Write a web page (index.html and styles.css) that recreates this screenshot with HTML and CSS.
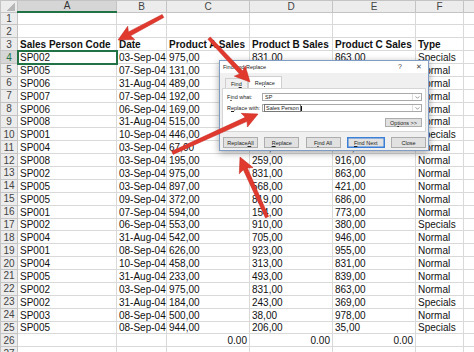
FILE: index.html
```html
<!DOCTYPE html>
<html lang="en">
<head>
    <meta charset="UTF-8">
    <title>Sales - Find and Replace</title>
    <link rel="stylesheet" href="styles.css">
</head>
<body>
    <div class="sheet">
        <table class="grid">
            <colgroup>
                <col class="c-rh"><col class="c-a"><col class="c-b"><col class="c-c"><col class="c-d"><col class="c-e"><col class="c-f"><col class="c-g">
            </colgroup>
            <tr class="hdr">
                <th class="corner"></th><th class="sel-col">A</th><th>B</th><th>C</th><th>D</th><th>E</th><th>F</th><th></th>
            </tr>
            <tr><th>1</th><td></td><td></td><td></td><td></td><td></td><td></td><td></td></tr>
            <tr><th>2</th><td></td><td></td><td></td><td></td><td></td><td></td><td></td></tr>
            <tr class="bold"><th>3</th><td>Sales Person Code</td><td>Date</td><td>Product A Sales</td><td>Product B Sales</td><td>Product C Sales</td><td>Type</td><td></td></tr>
            <tr><th class="sel-row">4</th><td class="active">SP002</td><td class="r">03-Sep-04</td><td>975,00</td><td>831.00</td><td>863.00</td><td>Specials</td><td></td></tr>
            <tr><th>5</th><td>SP005</td><td class="r">07-Sep-04</td><td>131,00</td><td>512,00</td><td>640,00</td><td>Normal</td><td></td></tr>
            <tr><th>6</th><td>SP006</td><td class="r">31-Aug-04</td><td>489,00</td><td>277,00</td><td>718,00</td><td>Normal</td><td></td></tr>
            <tr><th>7</th><td>SP007</td><td class="r">07-Sep-04</td><td>192,00</td><td>604,00</td><td>355,00</td><td>Normal</td><td></td></tr>
            <tr><th>8</th><td>SP006</td><td class="r">06-Sep-04</td><td>169,00</td><td>448,00</td><td>902,00</td><td>Normal</td><td></td></tr>
            <tr><th>9</th><td>SP008</td><td class="r">31-Aug-04</td><td>515,00</td><td>736,00</td><td>291,00</td><td>Normal</td><td></td></tr>
            <tr><th>10</th><td>SP001</td><td class="r">10-Sep-04</td><td>446,00</td><td>183,00</td><td>564,00</td><td>Specials</td><td></td></tr>
            <tr><th>11</th><td>SP004</td><td class="r">03-Sep-04</td><td>67,00</td><td>820,00</td><td>417,00</td><td>Normal</td><td></td></tr>
            <tr><th>12</th><td>SP008</td><td class="r">03-Sep-04</td><td>195,00</td><td>259,00</td><td>916,00</td><td>Normal</td><td></td></tr>
            <tr><th>13</th><td>SP002</td><td class="r">03-Sep-04</td><td>975,00</td><td>831,00</td><td>863,00</td><td>Normal</td><td></td></tr>
            <tr><th>14</th><td>SP005</td><td class="r">03-Sep-04</td><td>897,00</td><td>568,00</td><td>421,00</td><td>Normal</td><td></td></tr>
            <tr><th>15</th><td>SP005</td><td class="r">09-Sep-04</td><td>372,00</td><td>819,00</td><td>686,00</td><td>Normal</td><td></td></tr>
            <tr><th>16</th><td>SP001</td><td class="r">07-Sep-04</td><td>594,00</td><td>154,00</td><td>773,00</td><td>Normal</td><td></td></tr>
            <tr><th>17</th><td>SP002</td><td class="r">06-Sep-04</td><td>553,00</td><td>910,00</td><td>380,00</td><td>Specials</td><td></td></tr>
            <tr><th>18</th><td>SP004</td><td class="r">31-Aug-04</td><td>542,00</td><td>705,00</td><td>946,00</td><td>Normal</td><td></td></tr>
            <tr><th>19</th><td>SP001</td><td class="r">08-Sep-04</td><td>626,00</td><td>923,00</td><td>955,00</td><td>Normal</td><td></td></tr>
            <tr><th>20</th><td>SP004</td><td class="r">10-Sep-04</td><td>458,00</td><td>313,00</td><td>831,00</td><td>Normal</td><td></td></tr>
            <tr><th>21</th><td>SP005</td><td class="r">31-Aug-04</td><td>233,00</td><td>493,00</td><td>839,00</td><td>Normal</td><td></td></tr>
            <tr><th>22</th><td>SP002</td><td class="r">03-Sep-04</td><td>975,00</td><td>831,00</td><td>863,00</td><td>Normal</td><td></td></tr>
            <tr><th>23</th><td>SP002</td><td class="r">31-Aug-04</td><td>184,00</td><td>243,00</td><td>369,00</td><td>Specials</td><td></td></tr>
            <tr><th>24</th><td>SP003</td><td class="r">08-Sep-04</td><td>500,00</td><td>38,00</td><td>978,00</td><td>Normal</td><td></td></tr>
            <tr><th>25</th><td>SP005</td><td class="r">08-Sep-04</td><td>944,00</td><td>206,00</td><td>35,00</td><td>Specials</td><td></td></tr>
            <tr><th>26</th><td></td><td></td><td class="r">0.00</td><td class="r">0.00</td><td class="r">0.00</td><td></td><td></td></tr>
            <tr><th>27</th><td></td><td></td><td></td><td></td><td></td><td></td><td></td></tr>
        </table>

        <!-- Find and Replace dialog -->
        <div class="dialog">
            <div class="dlg-title">
                <span>Find and Replace</span>
                <span class="dlg-ctrls"><span>?</span><span class="x">&#x2715;</span></span>
            </div>
            <div class="dlg-tabs">
                <span class="tab">Fin<u>d</u></span>
                <span class="tab active">Re<u>p</u>lace</span>
            </div>
            <div class="dlg-panel">
                <div class="field">
                    <label>F<u>i</u>nd what:</label>
                    <div class="combo"><span>SP</span><span class="drop"><svg viewBox="0 0 6 4" width="5" height="3"><path d="M0.5 0.5 L3 3 L5.5 0.5" fill="none" stroke="#555" stroke-width="0.8"/></svg></span></div>
                </div>
                <div class="field">
                    <label>R<u>e</u>place with:</label>
                    <div class="combo"><span class="hl">Sales Person</span><span class="cursor"></span><span class="drop"><svg viewBox="0 0 6 4" width="5" height="3"><path d="M0.5 0.5 L3 3 L5.5 0.5" fill="none" stroke="#555" stroke-width="0.8"/></svg></span></div>
                </div>
                <div class="opts"><span class="btn">Op<u>t</u>ions &gt;&gt;</span></div>
            </div>
            <div class="dlg-buttons">
                <span class="btn">Replace <u>A</u>ll</span>
                <span class="btn"><u>R</u>eplace</span>
                <span class="btn">F<u>i</u>nd All</span>
                <span class="btn default"><u>F</u>ind Next</span>
                <span class="btn">Close</span>
            </div>
        </div>

        <!-- annotation arrows -->
        <svg class="arrows" width="474" height="352" viewBox="0 0 474 352">
            <g transform="translate(118 40) rotate(151.9)">
                <polygon points="0,0 -15,-7.5 -13,-2.2 -51,-1.7 -51,1.7 -13,2.2 -15,7.5"/>
            </g>
            <g transform="translate(250 82) rotate(47)">
                <polygon points="0,0 -15,-7.5 -13,-2.2 -60,-1.7 -60,1.7 -13,2.2 -15,7.5"/>
            </g>
            <g transform="translate(258 114) rotate(-24.4)">
                <polygon points="0,0 -15,-7.5 -13,-2.2 -94,-1.7 -94,1.7 -13,2.2 -15,7.5"/>
            </g>
            <g transform="translate(240 157) rotate(-114.2)">
                <polygon points="0,0 -15,-7.5 -13,-2.2 -66,-1.7 -66,1.7 -13,2.2 -15,7.5"/>
            </g>
        </svg>
    </div>
</body>
</html>
```

FILE: styles.css
```css
/* Excel sheet with Find & Replace dialog */
:root {
    --grid-line: #d9d9d9;
    --head-bg: #ececec;
    --head-line: #c4c4c4;
    --excel-green: #217346;
    --arrow-red: #e0392e;
}

body {
    margin: 0;
    overflow: hidden;
    background: white;
    font-family: "Liberation Sans", Arial, sans-serif;
}

.sheet {
    position: relative;
    width: 474px;
    height: 352px;
    overflow: hidden;
}

.grid {
    border-collapse: collapse;
    table-layout: fixed;
    width: 493px;
    font-size: 10px;
    color: #111;
}

.c-rh { width: 17px; }
.c-a { width: 99px; }
.c-b { width: 50px; }
.c-c { width: 83px; }
.c-d { width: 83px; }
.c-e { width: 83px; }
.c-f { width: 48px; }
.c-g { width: 30px; }

.grid tr {
    height: 12.88px;
}

.grid td {
    border: 1px solid var(--grid-line);
    padding: 0 2px;
    white-space: nowrap;
    overflow: visible;
    line-height: 11px;
    vertical-align: bottom;
}

.grid td.r {
    text-align: right;
}

.grid th {
    background: var(--head-bg);
    border: 1px solid var(--head-line);
    color: #444;
    font-weight: normal;
    font-size: 10px;
    line-height: 11px;
    padding: 0;
    text-align: center;
}

.grid tr.hdr {
    height: 11px;
}

.grid tr.hdr th {
    line-height: 10px;
    vertical-align: bottom;
}

.grid th.corner {
    background: var(--head-bg) linear-gradient(to bottom right, transparent 50%, #b7b7b7 50%) no-repeat right 2px bottom 1px / 9px 8px;
}

.grid th.sel-col {
    background: #d6d6d6;
    border-bottom: 2px solid var(--excel-green);
    color: #333;
}

.grid th.sel-row {
    background: #d6d6d6;
    color: var(--excel-green);
}

.grid tr.bold td {
    font-weight: bold;
}

.grid td.active {
    outline: 2px solid var(--excel-green);
    outline-offset: -1px;
}

/* Dialog */
.dialog {
    position: absolute;
    left: 219px;
    top: 60px;
    width: 210px;
    height: 91px;
    box-sizing: border-box;
    background: #f0f0f0;
    border: 1px solid #7f9cc4;
    box-shadow: 0 2px 7px rgba(0, 0, 0, 0.35);
    font-size: 5.5px;
    color: #222;
    display: flex;
    flex-direction: column;
}

.dlg-title {
    height: 12px;
    background: white;
    display: flex;
    align-items: center;
    justify-content: space-between;
    padding: 0 6px 0 3px;
}

.dlg-ctrls {
    display: flex;
    gap: 14px;
    font-size: 7px;
    color: #444;
}

.dlg-ctrls .x {
    font-size: 6.5px;
}

.dlg-tabs {
    display: flex;
    align-items: flex-end;
    height: 15px;
    padding-left: 5px;
    box-sizing: border-box;
}

.tab {
    height: 9px;
    padding: 0 5px;
    border: 1px solid #cfcfcf;
    border-bottom: none;
    background: #f0f0f0;
    display: flex;
    align-items: center;
}

.tab.active {
    height: 11px;
    background: white;
    padding: 0 6px;
}

.dlg-panel {
    margin: 0 2px;
    height: 44px;
    box-sizing: border-box;
    background: white;
    border: 1px solid #d5d5d5;
    padding: 4px 3px 0 4px;
    display: flex;
    flex-direction: column;
    gap: 3px;
}

.field {
    display: flex;
    align-items: center;
    height: 8px;
}

.field label {
    width: 35px;
}

.combo {
    flex: 1;
    height: 8px;
    box-sizing: border-box;
    border: 1px solid #a9a9a9;
    display: flex;
    align-items: center;
    padding-left: 2px;
    background: white;
}

.combo .hl {
    outline: 0.5px solid #777;
    padding: 0 1px;
}

.cursor {
    width: 0.6px;
    height: 5px;
    background: #111;
    margin-left: 1px;
}

.drop {
    margin-left: auto;
    width: 8px;
    height: 6px;
    border-left: 1px solid #ddd;
    display: flex;
    align-items: center;
    justify-content: center;
}

.opts {
    display: flex;
    justify-content: flex-end;
    margin-top: 3px;
}

.btn {
    height: 9px;
    box-sizing: border-box;
    background: #e1e1e1;
    border: 1px solid #adadad;
    display: flex;
    align-items: center;
    justify-content: center;
}

.opts .btn {
    width: 37px;
}

.dlg-buttons {
    display: flex;
    justify-content: space-between;
    padding: 5px 2px 0 3px;
}

.dlg-buttons .btn {
    width: 35px;
    height: 11px;
}

.dlg-buttons .btn.default {
    width: 38px;
    border: 1px solid #3c7fd6;
    box-shadow: inset 0 0 0 0.5px #3c7fd6;
}

/* Arrows */
.arrows {
    position: absolute;
    left: 0;
    top: 0;
    pointer-events: none;
}

.arrows polygon {
    fill: var(--arrow-red);
    stroke: #c92a22;
    stroke-width: 0.5;
    stroke-linejoin: round;
}
```
